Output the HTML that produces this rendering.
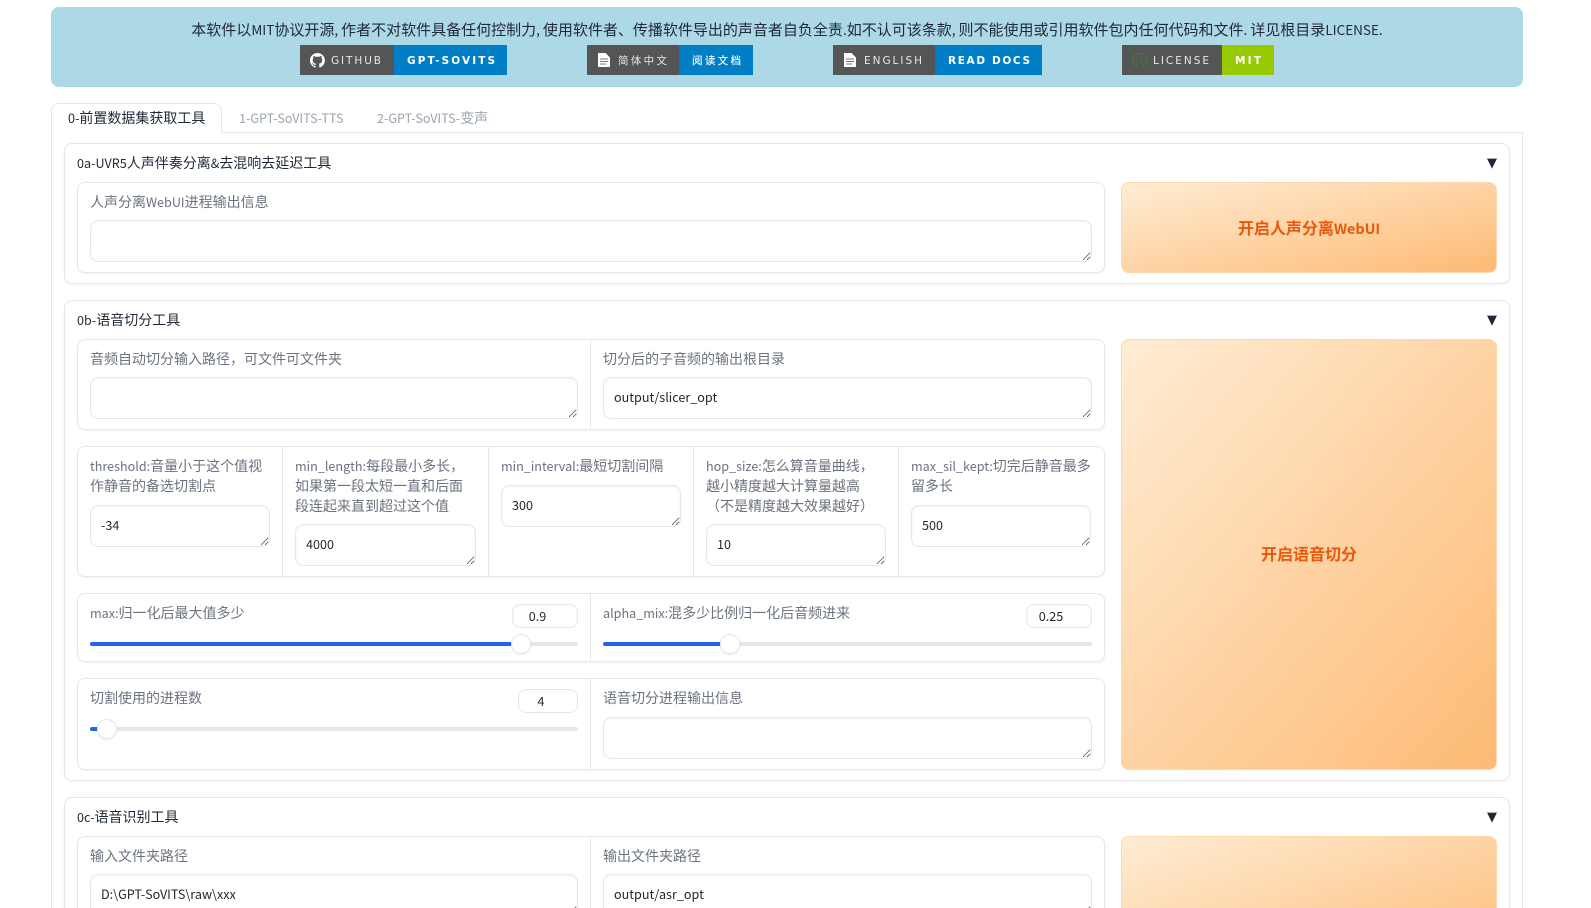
<!DOCTYPE html>
<html><head><meta charset="utf-8"><style>
html,body{margin:0;padding:0;background:#fff;width:1591px;height:908px;overflow:hidden}
body{position:relative;font-family:"Noto Sans CJK SC","Liberation Sans",sans-serif;font-size:14px;color:#1f2937}
i{font-style:normal;font-size:.9em}
.a,.box,.l,textarea,.btn,.ni,.tr,.fl,.th,.sp{position:absolute;box-sizing:border-box}
.box{border:1px solid #e5e7eb;border-radius:8px;background:#fff;box-shadow:0 1px 2px rgba(0,0,0,.05)}
.l{color:#6b7280;line-height:20px;font-size:14px;white-space:nowrap}
.t{position:absolute;line-height:20px;white-space:nowrap;color:#1f2937}
.arr{position:absolute;left:1487px;font-size:13px;line-height:16px;color:#1f2937;font-family:"DejaVu Sans",sans-serif}
textarea{display:block;border:1px solid #e5e7eb;border-radius:8px;background:#fff;box-shadow:inset 0 1px 2px rgba(0,0,0,.05);padding:9px 10px 11px;margin:0;font:12.6px/20px "Noto Sans CJK SC","Liberation Sans",sans-serif;color:#27272a;outline:0;height:42px;overflow:hidden;resize:vertical}
.btn{left:1121px;width:376px;border:1px solid #fed7aa;border-radius:8px;background:linear-gradient(to bottom right,#ffedd5,#fdba74);color:#ea580c;font-weight:700;font-size:16px;display:flex;align-items:center;justify-content:center;padding-bottom:4px}
.sp{width:1px;background:#e5e7eb}
.ni{height:24px;border:1px solid #e5e7eb;border-radius:8px;background:#fff;box-shadow:inset 0 1px 2px rgba(0,0,0,.03);text-align:center;line-height:22px;font-size:12.6px;color:#27272a}
.tr{height:4px;background:#e5e7eb;border-radius:2px}
.fl{height:4px;background:#2563eb;border-radius:2px 0 0 2px}
.th{width:20px;height:20px;border:1px solid #e5e7eb;border-radius:50%;background:#fff;box-shadow:0 1px 2px rgba(0,0,0,.08)}
</style></head><body>

<div class="a" style="left:51px;top:7px;width:1472px;height:80px;background:#add8e6;border-radius:8px"></div>
<div class="a" style="left:51px;top:19px;width:1472px;text-align:center;font-size:15px;line-height:20px;color:#1f2937;white-space:nowrap">本软件以<i>MIT</i>协议开源<i>, </i>作者不对软件具备任何控制力<i>, </i>使用软件者、传播软件导出的声音者自负全责<i>.</i>如不认可该条款<i>, </i>则不能使用或引用软件包内任何代码和文件<i>. </i>详见根目录<i>LICENSE.</i></div>

<svg class="a" style="left:0;top:0" width="1591" height="100" viewBox="0 0 1591 100">
<g font-family="DejaVu Sans,sans-serif" font-size="10.5" fill="#fff">
<rect x="300" y="45" width="94" height="30" fill="#555"/><rect x="394" y="45" width="113" height="30" fill="#007ec6"/>
<rect x="587" y="45" width="92" height="30" fill="#555"/><rect x="679" y="45" width="74" height="30" fill="#007ec6"/>
<rect x="833" y="45" width="102" height="30" fill="#555"/><rect x="935" y="45" width="107" height="30" fill="#007ec6"/>
<rect x="1122" y="45" width="100" height="30" fill="#555"/><rect x="1222" y="45" width="52" height="30" fill="#97ca00"/>
<text x="331" y="64" textLength="50" fill="#e8e8e8">GITHUB</text>
<text x="407" y="64" textLength="88" font-weight="700">GPT-SOVITS</text>
<text x="618" y="64" textLength="49" font-family="Noto Sans CJK SC,sans-serif" fill="#e8e8e8">简体中文</text>
<text x="692" y="64" textLength="49" font-family="Noto Sans CJK SC,sans-serif" font-weight="500">阅读文档</text>
<text x="864" y="64" textLength="58" fill="#e8e8e8">ENGLISH</text>
<text x="948" y="64" textLength="82" font-weight="700">READ DOCS</text>
<text x="1153" y="64" textLength="56" fill="#e8e8e8">LICENSE</text>
<text x="1235" y="64" textLength="26" font-weight="700">MIT</text>
</g>
<path transform="translate(310 53) scale(.93)" fill="#fff" d="M8 0C3.58 0 0 3.58 0 8c0 3.54 2.29 6.53 5.47 7.59.4.07.55-.17.55-.38 0-.19-.01-.82-.01-1.49-2.01.37-2.53-.49-2.69-.94-.09-.23-.48-.94-.82-1.13-.28-.15-.68-.52-.01-.53.63-.01 1.08.58 1.23.82.72 1.21 1.87.87 2.33.66.07-.52.28-.87.51-1.07-1.78-.2-3.64-.89-3.64-3.95 0-.87.31-1.59.82-2.15-.08-.2-.36-1.02.08-2.12 0 0 .67-.21 2.2.82.64-.18 1.32-.27 2-.27s1.36.09 2 .27c1.53-1.04 2.2-.82 2.2-.82.44 1.1.16 1.92.08 2.12.51.56.82 1.27.82 2.15 0 3.07-1.87 3.75-3.65 3.95.29.25.54.73.54 1.48 0 1.07-.01 1.93-.01 2.2 0 .21.15.46.55.38A8.01 8.01 0 0 0 16 8c0-4.42-3.58-8-8-8z"/>
<g fill="#fff">
<path d="M598 53h7.500l4.500 4.500V67h-12z"/>
<path d="M844 53h7.500l4.500 4.500V67h-12z"/>
</g>
<g stroke="#777" stroke-width="1" fill="none">
<path d="M600 59h8M600 61.500h8M600 64h6M846 59h8M846 61.500h8M846 64h6"/>
</g>
<path d="M1136.500 66.500A7 7 0 1 1 1142.500 66.500L1141 62.500A2.700 2.700 0 1 0 1138 62.500Z" fill="none" stroke="#3f7a3a" stroke-width="1.100"/>
</svg>

<!-- tabs -->
<div class="a" style="left:51px;top:132px;width:1472px;height:790px;border:1px solid #e5e7eb"></div>
<div class="a" style="left:51px;top:103px;width:171px;height:30px;border:1px solid #e5e7eb;border-bottom:0;border-radius:8px 8px 0 0;background:#fff"></div>
<div class="t" style="left:68px;top:108px"><i>0-</i>前置数据集获取工具</div>
<div class="t" style="left:239px;top:108px;color:#9ca3af"><i>1-GPT-SoVITS-TTS</i></div>
<div class="t" style="left:377px;top:108px;color:#9ca3af"><i>2-GPT-SoVITS-</i>变声</div>

<!-- 0a -->
<div class="box" style="left:64px;top:143px;width:1446px;height:141px"></div>
<div class="t" style="left:77px;top:153px"><i>0a-UVR5</i>人声伴奏分离<i>&amp;</i>去混响去延迟工具</div>
<div class="arr" style="top:156px">▼</div>
<div class="box" style="left:77px;top:182px;width:1028px;height:91px"></div>
<div class="l" style="left:90px;top:192px">人声分离<i>WebUI</i>进程输出信息</div>
<textarea style="left:90px;top:220px;width:1002px"></textarea>
<div class="btn" style="top:182px;height:91px;padding-bottom:2px"><span>开启人声分离<i>WebUI</i></span></div>

<!-- 0b -->
<div class="box" style="left:64px;top:300px;width:1446px;height:481px"></div>
<div class="t" style="left:77px;top:310px"><i>0b-</i>语音切分工具</div>
<div class="arr" style="top:313px">▼</div>

<div class="box" style="left:77px;top:339px;width:1028px;height:91px"></div>
<div class="sp" style="left:590px;top:339px;height:91px"></div>
<div class="l" style="left:90px;top:349px">音频自动切分输入路径，可文件可文件夹</div>
<textarea style="left:90px;top:377px;width:488px"></textarea>
<div class="l" style="left:603px;top:349px">切分后的子音频的输出根目录</div>
<textarea style="left:603px;top:377px;width:489px">output/slicer_opt</textarea>

<div class="box" style="left:77px;top:446px;width:1028px;height:131px"></div>
<div class="sp" style="left:282px;top:446px;height:131px"></div>
<div class="sp" style="left:488px;top:446px;height:131px"></div>
<div class="sp" style="left:693px;top:446px;height:131px"></div>
<div class="sp" style="left:898px;top:446px;height:131px"></div>
<div class="l" style="left:90px;top:456px"><i>threshold:</i>音量小于这个值视<br>作静音的备选切割点</div>
<textarea style="left:90px;top:505px;width:180px">-34</textarea>
<div class="l" style="left:295px;top:456px"><i>min_length:</i>每段最小多长，<br>如果第一段太短一直和后面<br>段连起来直到超过这个值</div>
<textarea style="left:295px;top:524px;width:181px">4000</textarea>
<div class="l" style="left:501px;top:456px"><i>min_interval:</i>最短切割间隔</div>
<textarea style="left:501px;top:485px;width:180px">300</textarea>
<div class="l" style="left:706px;top:456px"><i>hop_size:</i>怎么算音量曲线，<br>越小精度越大计算量越高<br>（不是精度越大效果越好）</div>
<textarea style="left:706px;top:524px;width:180px">10</textarea>
<div class="l" style="left:911px;top:456px"><i>max_sil_kept:</i>切完后静音最多<br>留多长</div>
<textarea style="left:911px;top:505px;width:180px">500</textarea>

<div class="box" style="left:77px;top:593px;width:1028px;height:69px"></div>
<div class="sp" style="left:590px;top:593px;height:69px"></div>
<div class="l" style="left:90px;top:603px"><i>max:</i>归一化后最大值多少</div>
<div class="ni" style="left:512px;top:604px;width:66px;padding-right:15px">0.9</div>
<div class="tr" style="left:90px;top:642px;width:488px"></div>
<div class="fl" style="left:90px;top:642px;width:422px"></div>
<div class="th" style="left:511px;top:634px"></div>
<div class="l" style="left:603px;top:603px"><i>alpha_mix:</i>混多少比例归一化后音频进来</div>
<div class="ni" style="left:1026px;top:604px;width:66px;padding-right:16px">0.25</div>
<div class="tr" style="left:603px;top:642px;width:489px"></div>
<div class="fl" style="left:603px;top:642px;width:118px"></div>
<div class="th" style="left:720px;top:634px"></div>

<div class="box" style="left:77px;top:678px;width:1028px;height:92px"></div>
<div class="sp" style="left:590px;top:678px;height:92px"></div>
<div class="l" style="left:90px;top:688px">切割使用的进程数</div>
<div class="ni" style="left:518px;top:689px;width:60px;padding-right:14px">4</div>
<div class="tr" style="left:90px;top:727px;width:488px"></div>
<div class="fl" style="left:90px;top:727px;width:8px"></div>
<div class="th" style="left:97px;top:719px"></div>
<div class="l" style="left:603px;top:688px">语音切分进程输出信息</div>
<textarea style="left:603px;top:717px;width:489px"></textarea>

<div class="btn" style="top:339px;height:431px">开启语音切分</div>

<!-- 0c -->
<div class="box" style="left:64px;top:797px;width:1446px;height:140px"></div>
<div class="t" style="left:77px;top:807px"><i>0c-</i>语音识别工具</div>
<div class="arr" style="top:810px">▼</div>
<div class="box" style="left:77px;top:836px;width:1028px;height:91px"></div>
<div class="sp" style="left:590px;top:836px;height:91px"></div>
<div class="l" style="left:90px;top:846px">输入文件夹路径</div>
<textarea style="left:90px;top:874px;width:488px">D:\GPT-SoVITS\raw\xxx</textarea>
<div class="l" style="left:603px;top:846px">输出文件夹路径</div>
<textarea style="left:603px;top:874px;width:489px">output/asr_opt</textarea>
<div class="btn" style="top:836px;height:140px"></div>

</body></html>
